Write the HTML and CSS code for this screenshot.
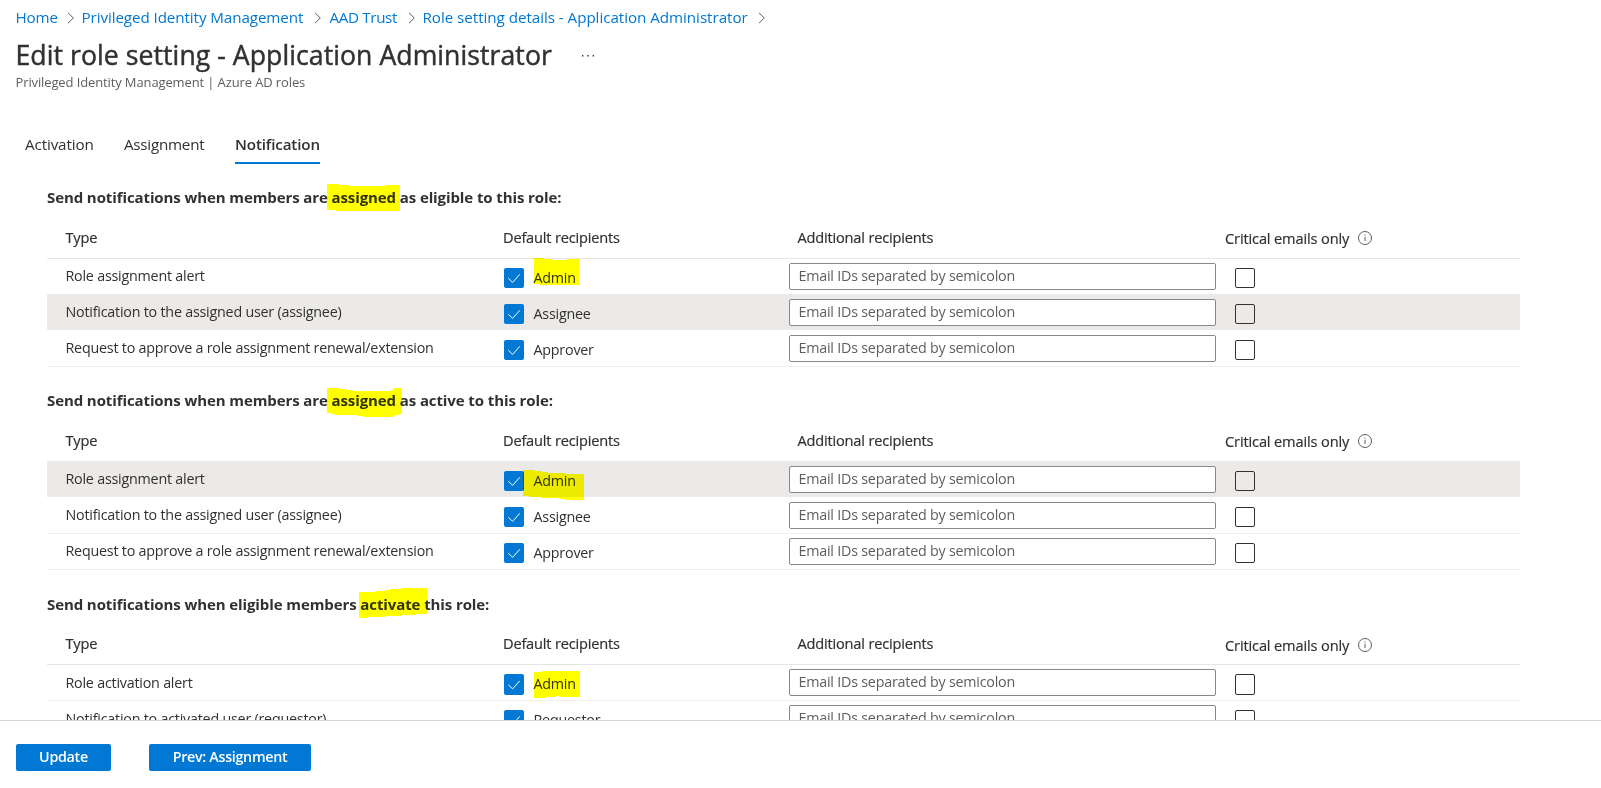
FILE: index.html
```html
<!DOCTYPE html>
<html lang="en">
<head>
<meta charset="utf-8">
<title>Edit role setting - Application Administrator</title>
<link rel="stylesheet" href="styles.css">
</head>
<body>
<svg class="defs" aria-hidden="true">
  <symbol id="tick" viewBox="0 0 20 20"><path d="M4.3 10.2 8.6 14.4 15.8 6.3" fill="none" stroke="#fff" stroke-width="1"/></symbol>
  <symbol id="chev" viewBox="0 0 8 12"><path d="M1 .8 6.3 6 1 11.2" fill="none" stroke="#605e5c" stroke-width="1"/></symbol>
  <symbol id="info" viewBox="0 0 16 16"><circle cx="8" cy="8" r="6.5" fill="none" stroke="#605e5c"/><path d="M8 6.8V11M8 4.6V5.7" stroke="#605e5c" stroke-width="1"/></symbol>
</svg>

<div class="app">
  <header class="header">
    <nav class="crumbs">
      <a class="home">Home</a><svg class="chev"><use href="#chev"/></svg>
      <a class="pim">Privileged Identity Management</a><svg class="chev"><use href="#chev"/></svg>
      <a class="trust">AAD Trust</a><svg class="chev"><use href="#chev"/></svg>
      <a class="details">Role setting details - Application Administrator</a><svg class="chev"><use href="#chev"/></svg>
    </nav>
    <div class="title-row">
      <h1 class="title">Edit role setting - Application Administrator</h1>
      <svg class="more" viewBox="0 0 14 2"><path d="M1 0h1.4v1.6H1zM6.3 0h1.4v1.6H6.3zM11.6 0H13v1.6h-1.4z" fill="#323130"/></svg>
    </div>
    <p class="subtitle">Privileged Identity Management | Azure AD roles</p>
  </header>

  <nav class="tabs">
    <a class="tab tab-activation">Activation</a>
    <a class="tab tab-assignment">Assignment</a>
    <a class="tab tab-active">Notification</a>
  </nav>

  <main class="content">
    <section class="group">
      <h2 class="group-title">Send notifications when members are assigned as eligible to this role:</h2>
      <div class="row head"><span class="type">Type</span><span>Default recipients</span><span class="extra">Additional recipients</span><span class="critical">Critical emails only<svg class="info"><use href="#info"/></svg></span></div>
      <div class="row"><span class="type">Role assignment alert</span><label class="pick"><svg class="box on"><use href="#tick"/></svg>Admin</label><div class="field">Email IDs separated by semicolon</div><i class="box off"></i></div>
      <div class="row hover"><span class="type">Notification to the assigned user (assignee)</span><label class="pick"><svg class="box on"><use href="#tick"/></svg>Assignee</label><div class="field">Email IDs separated by semicolon</div><i class="box off"></i></div>
      <div class="row"><span class="type">Request to approve a role assignment renewal/extension</span><label class="pick"><svg class="box on"><use href="#tick"/></svg>Approver</label><div class="field">Email IDs separated by semicolon</div><i class="box off"></i></div>
    </section>

    <section class="group">
      <h2 class="group-title">Send notifications when members are assigned as active to this role:</h2>
      <div class="row head"><span class="type">Type</span><span>Default recipients</span><span class="extra">Additional recipients</span><span class="critical">Critical emails only<svg class="info"><use href="#info"/></svg></span></div>
      <div class="row hover"><span class="type">Role assignment alert</span><label class="pick"><svg class="box on"><use href="#tick"/></svg>Admin</label><div class="field">Email IDs separated by semicolon</div><i class="box off"></i></div>
      <div class="row"><span class="type">Notification to the assigned user (assignee)</span><label class="pick"><svg class="box on"><use href="#tick"/></svg>Assignee</label><div class="field">Email IDs separated by semicolon</div><i class="box off"></i></div>
      <div class="row"><span class="type">Request to approve a role assignment renewal/extension</span><label class="pick"><svg class="box on"><use href="#tick"/></svg>Approver</label><div class="field">Email IDs separated by semicolon</div><i class="box off"></i></div>
    </section>

    <section class="group group-activate">
      <h2 class="group-title">Send notifications when eligible members activate this role:</h2>
      <div class="row head"><span class="type">Type</span><span>Default recipients</span><span class="extra">Additional recipients</span><span class="critical">Critical emails only<svg class="info"><use href="#info"/></svg></span></div>
      <div class="row tall"><span class="type">Role activation alert</span><label class="pick"><svg class="box on"><use href="#tick"/></svg>Admin</label><div class="field">Email IDs separated by semicolon</div><i class="box off"></i></div>
      <div class="row"><span class="type">Notification to activated user (requestor)</span><label class="pick"><svg class="box on"><use href="#tick"/></svg>Requestor</label><div class="field">Email IDs separated by semicolon</div><i class="box off"></i></div>
    </section>
  </main>

  <footer class="footer">
    <button class="btn update">Update</button>
    <button class="btn prev">Prev: Assignment</button>
  </footer>
</div>

<!-- Highlighter strokes over the page -->
<svg class="marker" width="1601" height="788" viewBox="0 0 1601 788" fill="#ff0" shape-rendering="crispEdges" aria-hidden="true">
  <path d="M327 184H339V185H350V186H386V185H400V211H336V210H327Z"/>
  <path d="M534 258H544V259H552V260H567V259H579V285H539V284H534Z"/>
  <path d="M327 388H339V389L350 390 355 391H388L393 390V388H402V414L396 415 392 417H364V416L349 415H335V414L327 413Z"/>
  <path d="M523 470H535V471L548 472V473H566V474H584V500H565V499L553 498H541V497H529V496H523Z"/>
  <path d="M359 592H376V591H385V590H390V589L414 588H427V614H416V615L386 616V617H376L359 618Z"/>
  <path d="M534 672H542V671H580V697H559L558 696H556L555 697H546V698H534Z"/>
</svg>
</body>
</html>
```

FILE: styles.css
```css
* { box-sizing: border-box; }

body {
  margin: 0;
  overflow: hidden;
  background: #fff;
  color: #323130;
  font-family: "Open Sans", "Noto Sans", sans-serif;
}

.defs { display: none; }

.app {
  display: flex;
  flex-direction: column;
  height: 788px;
}

/* Page header */
.header { padding-left: 15.5px; }

.crumbs {
  display: flex;
  align-items: center;
  height: 24px;
  margin-top: 5px;
  color: #0078d4;
  font-size: 15.2px;
  line-height: 24px;
  white-space: nowrap;
}

.crumbs .home { width: 51px; letter-spacing: -0.13px; }
.crumbs .pim { width: 232px; letter-spacing: -0.09px; }
.crumbs .trust { width: 78px; letter-spacing: -0.35px; }
.crumbs .details { width: 335px; letter-spacing: -0.045px; }

.chev {
  width: 8px;
  height: 12px;
  margin: 1px 7px 0 0;
  flex: none;
}

.crumbs .pim + .chev { margin-right: 8px; }

.title-row {
  display: flex;
  align-items: center;
  height: 36px;
  margin-top: 8px;
}

.title {
  margin: 0;
  width: 565px;
  font-size: 26.6px;
  font-weight: 400;
  line-height: 36px;
  letter-spacing: 0.07px;
  white-space: nowrap;
  -webkit-text-stroke: 0.45px #323130;
}

.more { width: 14px; height: 2px; margin-top: 2px; }

.subtitle {
  margin: 0;
  color: #605e5c;
  font-size: 13px;
  line-height: 18px;
  letter-spacing: -0.12px;
}

/* Tabs */
.tabs {
  display: flex;
  gap: 30px;
  height: 32px;
  margin: 41px 0 0 25px;
  font-size: 15.2px;
  line-height: 24px;
}

.tab { height: 32px; white-space: nowrap; }
.tab-activation { width: 69px; letter-spacing: -0.12px; }
.tab-assignment { width: 81px; letter-spacing: -0.24px; }
.tab-active {
  width: 85px;
  border-bottom: 2px solid #0078d4;
  font-weight: 600;
  letter-spacing: -0.14px;
}

/* Notification groups */
.content {
  flex: 1;
  min-height: 0;
  overflow: hidden;
  padding: 22px 81px 0 47px;
}

.group { height: 203px; }

.group-title {
  margin: 0;
  height: 33px;
  font-size: 15px;
  font-weight: 700;
  line-height: 22px;
  letter-spacing: -0.1px;
  white-space: nowrap;
}

.row {
  display: grid;
  grid-template-columns: 456px 286px 446px 1fr;
  height: 36px;
  border-bottom: 1px solid #f0efee;
  font-size: 14.3px;
  line-height: 34px;
  letter-spacing: -0.22px;
  white-space: nowrap;
}

.row.head {
  height: 40px;
  border-color: #e6e5e4;
  font-size: 14.6px;
  line-height: 37px;
  letter-spacing: -0.19px;
  -webkit-text-stroke: 0.2px #323130;
}

.row.hover { background: #ebeae9; border-bottom-color: #fff; }

/* hovered band covers the separator above it */
.row + .row.hover { margin-top: -1px; height: 37px; padding-top: 1px; }

.type { padding-left: 18.5px; }
.extra { padding-left: 8.5px; }

.critical {
  display: flex;
  align-items: center;
  gap: 8px;
  margin-left: -10px;
  letter-spacing: -0.14px;
}

.info { width: 16px; height: 16px; margin-top: -1px; }

.pick {
  display: flex;
  align-items: flex-start;
  gap: 9.5px;
  padding-left: 1px;
  line-height: 38px;
}

.box { width: 20px; height: 20px; margin-top: 9px; border-radius: 2px; }
.box.on { background: #0078d4; }
.box.off { border: 1px solid #323130; }

.field {
  width: 427px;
  height: 27px;
  margin-top: 4px;
  padding-left: 8.5px;
  border: 1px solid #8a8886;
  border-radius: 2px;
  background: #fff;
  color: #605e5c;
  line-height: 23px;
  letter-spacing: -0.22px;
}

.group-activate .group-title { line-height: 24px; }
.group-activate .row:not(.head) .type { line-height: 36px; }
.group-activate .critical { padding-top: 2px; }
.tall .box { height: 21px; }

/* Footer */
.footer {
  display: flex;
  gap: 38px;
  height: 68px;
  padding: 23px 16px 0;
  border-top: 1px solid #d6d6d6;
}

.btn {
  height: 27px;
  padding: 0 0 2px;
  border: 0;
  border-radius: 2px;
  background: #0078d4;
  color: #fff;
  font: 600 14.3px/25px "Open Sans", "Noto Sans", sans-serif;
  letter-spacing: -0.3px;
}

.update { width: 95px; }
.prev { width: 162px; }

.marker {
  position: absolute;
  top: 0;
  left: 0;
  mix-blend-mode: multiply;
}
```
